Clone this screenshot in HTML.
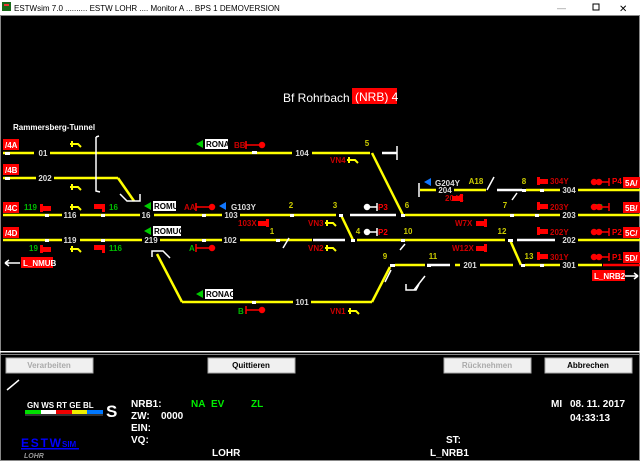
<!DOCTYPE html><html><head><meta charset="utf-8"><style>
body{margin:0;width:640px;height:461px;overflow:hidden;background:#000;font-family:"Liberation Sans",Arial,sans-serif}
svg{display:block}
text{font-family:"Liberation Sans",Arial,sans-serif;font-weight:bold}
</style></head><body>
<svg width="640" height="461" viewBox="0 0 640 461">
<rect x="0" y="0" width="640" height="15" fill="#fff"/>
<rect x="2" y="2" width="9" height="9" fill="#1a6a1a"/><rect x="4" y="4" width="5" height="2" fill="#e33"/>
<text x="14" y="11" font-size="8" style="font-weight:normal" fill="#000">ESTWsim 7.0 .......... ESTW LOHR .... Monitor A ... BPS 1  DEMOVERSION</text>
<text x="557" y="11" font-size="9" style="font-weight:normal" fill="#888">—</text>
<rect x="593" y="4" width="6" height="6" fill="none" stroke="#000"/>
<text x="619" y="12" font-size="10" style="font-weight:normal" fill="#000">✕</text>
<rect x="0.5" y="15.5" width="639" height="445" fill="none" stroke="#888"/>
<text x="283" y="102" font-size="12" style="font-weight:normal" fill="#fff">Bf Rohrbach</text>
<rect x="352" y="88" width="45" height="16" fill="#f00"/>
<text x="355" y="101" font-size="12" style="font-weight:normal" fill="#fff">(NRB) 4</text>
<text x="13" y="130" font-size="8" fill="#fff">Rammersberg-Tunnel</text>
<g stroke="#ff0" stroke-width="2.5" fill="none">
<line x1="3" y1="153" x2="370" y2="153"/>
<line x1="3" y1="178" x2="118" y2="178"/>
<line x1="118" y1="178" x2="134" y2="201"/>
<line x1="3" y1="215" x2="336" y2="215"/>
<line x1="405" y1="215" x2="640" y2="215"/>
<line x1="3" y1="240" x2="312" y2="240"/>
<line x1="357" y1="240" x2="505" y2="240"/>
<line x1="560" y1="240" x2="640" y2="240"/>
<line x1="372" y1="153" x2="403" y2="215"/>
<line x1="341" y1="215" x2="353" y2="240"/>
<line x1="510" y1="240" x2="521" y2="265"/>
<line x1="395" y1="265" x2="425" y2="265"/>
<line x1="455" y1="265" x2="513" y2="265"/>
<line x1="525" y1="265" x2="602" y2="265"/>
<line x1="157" y1="254" x2="182" y2="302"/>
<line x1="182" y1="302" x2="372" y2="302"/>
<line x1="372" y1="302" x2="390" y2="267"/>
<line x1="420" y1="190" x2="486" y2="190"/>
<line x1="526" y1="190" x2="640" y2="190"/>
</g>
<line x1="603" y1="265" x2="640" y2="265" stroke="#f00" stroke-width="2.5"/>
<g stroke="#fff" stroke-width="2.5" fill="none">
<line x1="382" y1="153" x2="397" y2="153"/><line x1="397" y1="146" x2="397" y2="160" stroke-width="1.5"/>
<line x1="350" y1="215" x2="396" y2="215"/>
<line x1="313" y1="240" x2="345" y2="240"/>
<line x1="517" y1="240" x2="555" y2="240"/>
<line x1="427" y1="265" x2="450" y2="265"/>
<line x1="497" y1="190" x2="522" y2="190"/>
<line x1="419" y1="183" x2="419" y2="197" stroke-width="1.5"/>
<path d="M96 137 L99 136 M96 137 L96 191 L100 192" stroke-width="1.5"/>
<path d="M120 194 L127 201 L140 201 L140 194" stroke-width="1.5"/>
<path d="M152 257 L152 251 L163 251 L170 258" stroke-width="1.5"/>
<path d="M406 284 L406 290 L416 290 L419 284" stroke-width="1.5"/>
<path d="M414 290 L425 276" stroke-width="1.5"/>
<line x1="7" y1="390" x2="19" y2="380" stroke-width="1.5"/>
<line x1="385" y1="282" x2="391" y2="270" stroke-width="1.5"/>
<line x1="283" y1="248" x2="289" y2="238" stroke-width="1.5"/>
<line x1="400" y1="250" x2="405" y2="244" stroke-width="1.5"/>
<line x1="512" y1="200" x2="517" y2="193" stroke-width="1.5"/>
<line x1="487" y1="190" x2="494" y2="177" stroke-width="1.5"/>
</g>
<g fill="#fff">
<rect x="5" y="152" width="5" height="3"/><rect x="5" y="177" width="5" height="3"/>
<rect x="252" y="151" width="5" height="3"/><rect x="45" y="214" width="4" height="3"/><rect x="101" y="214" width="4" height="3"/>
<rect x="202" y="214" width="4" height="3"/><rect x="290" y="214" width="4" height="3"/><rect x="339" y="214" width="4" height="3"/><rect x="401" y="214" width="4" height="3"/><rect x="510" y="214" width="4" height="3"/><rect x="535" y="214" width="4" height="3"/>
<rect x="45" y="239" width="4" height="3"/><rect x="101" y="239" width="4" height="3"/><rect x="202" y="239" width="4" height="3"/><rect x="276" y="239" width="4" height="3"/><rect x="351" y="239" width="4" height="3"/><rect x="401" y="239" width="4" height="3"/><rect x="508" y="239" width="5" height="3"/>
<rect x="390" y="264" width="5" height="3"/><rect x="427" y="264" width="4" height="3"/><rect x="521" y="264" width="4" height="3"/><rect x="540" y="264" width="4" height="3"/>
<rect x="252" y="301" width="4" height="3"/>
<rect x="522" y="189" width="4" height="3"/><rect x="540" y="189" width="4" height="3"/>
</g>
<g font-size="8" fill="#ddd" text-anchor="middle">
<rect x="34" y="148" width="16" height="9" fill="#000"/><text x="43" y="156">01</text>
<rect x="292" y="148" width="20" height="9" fill="#000"/><text x="302" y="156">104</text>
<rect x="36" y="173" width="18" height="9" fill="#000"/><text x="45" y="181">202</text>
<rect x="62" y="210" width="18" height="9" fill="#000"/><text x="70" y="218">116</text>
<rect x="140" y="210" width="14" height="9" fill="#000"/><text x="146" y="218">16</text>
<rect x="222" y="210" width="18" height="9" fill="#000"/><text x="231" y="218">103</text>
<rect x="62" y="235" width="18" height="9" fill="#000"/><text x="70" y="243">119</text>
<rect x="142" y="235" width="18" height="9" fill="#000"/><text x="151" y="243">219</text>
<rect x="222" y="235" width="18" height="9" fill="#000"/><text x="230" y="243">102</text>
<rect x="436" y="185" width="18" height="9" fill="#000"/><text x="445" y="193">204</text>
<rect x="560" y="185" width="18" height="9" fill="#000"/><text x="569" y="193">304</text>
<rect x="560" y="210" width="18" height="9" fill="#000"/><text x="569" y="218">203</text>
<rect x="560" y="235" width="18" height="9" fill="#000"/><text x="569" y="243">202</text>
<rect x="460" y="260" width="20" height="9" fill="#000"/><text x="470" y="268">201</text>
<rect x="560" y="260" width="18" height="9" fill="#000"/><text x="569" y="268">301</text>
<rect x="293" y="297" width="18" height="9" fill="#000"/><text x="302" y="305">101</text>
</g>
<g font-size="8" fill="#cc0" text-anchor="middle">
<text x="367" y="146">5</text><text x="291" y="208">2</text><text x="335" y="208">3</text><text x="272" y="234">1</text><text x="358" y="234">4</text><text x="407" y="208">6</text><text x="408" y="234">10</text><text x="385" y="259">9</text><text x="433" y="259">11</text><text x="502" y="234">12</text><text x="529" y="259">13</text><text x="505" y="208">7</text><text x="524" y="184">8</text><text x="476" y="184">A18</text>
</g>
<g font-size="8" style="font-weight:normal" fill="#fff">
<rect x="3" y="139" width="16" height="11" fill="#f00"/><text x="5" y="148">/4A</text>
<rect x="3" y="164" width="16" height="11" fill="#f00"/><text x="5" y="173">/4B</text>
<rect x="3" y="202" width="16" height="11" fill="#f00"/><text x="5" y="211">/4C</text>
<rect x="3" y="227" width="16" height="11" fill="#f00"/><text x="5" y="236">/4D</text>
<rect x="21" y="257" width="32" height="11" fill="#f00"/><text x="23" y="266">L_NMUB</text>
<rect x="623" y="177" width="17" height="11" fill="#f00"/><text x="625" y="186">5A/</text>
<rect x="623" y="202" width="17" height="11" fill="#f00"/><text x="625" y="211">5B/</text>
<rect x="623" y="227" width="17" height="11" fill="#f00"/><text x="625" y="236">5C/</text>
<rect x="623" y="252" width="17" height="11" fill="#f00"/><text x="625" y="261">5D/</text>
<rect x="592" y="270" width="33" height="11" fill="#f00"/><text x="594" y="279">L_NRB2</text>
</g>
<path d="M5 263 H20 M5 263 l4 -3 M5 263 l4 3" stroke="#fff" stroke-width="1.5"/>
<path d="M625 276 H638 M638 276 l-4 -3 M638 276 l-4 3" stroke="#fff" stroke-width="1.5"/>
<g fill="#0c0"><path d="M196 144 l7 -4 v8z"/><path d="M144 206 l7 -4 v8z"/><path d="M144 231 l7 -4 v8z"/><path d="M196 294 l7 -4 v8z"/></g>
<g fill="#17f"><path d="M219 206 l7 -4 v8z"/><path d="M424 182 l7 -4 v8z"/></g>
<g font-size="8" style="font-weight:normal" fill="#000">
<rect x="205" y="139" width="23" height="10" fill="#fff"/><text x="206" y="147">RONA</text>
<rect x="153" y="201" width="23" height="10" fill="#fff"/><text x="154" y="209">ROMU</text>
<rect x="153" y="226" width="28" height="10" fill="#fff"/><text x="154" y="234">ROMUG</text>
<rect x="205" y="289" width="28" height="10" fill="#fff"/><text x="206" y="297">RONAG</text>
</g>
<g font-size="8" fill="#ddd"><text x="231" y="210">G103Y</text><text x="435" y="186">G204Y</text></g>
<g font-size="8" fill="#0b0"><text x="24" y="210">119</text><text x="109" y="210">16</text><text x="29" y="251">19</text><text x="109" y="251">116</text><text x="189" y="251">A</text><text x="238" y="314">B</text><text x="593" y="210">P3</text></g>
<g font-size="8" fill="#c00"><text x="234" y="148">BB</text><text x="184" y="210">AA</text><text x="238" y="226">103X</text><text x="330" y="163">VN4</text><text x="308" y="226">VN3</text><text x="308" y="251">VN2</text><text x="330" y="314">VN1</text>
<text x="378" y="210" fill="#f00">P3</text><text x="378" y="235" fill="#f00">P2</text>
<text x="445" y="201">204X</text><text x="455" y="226">W7X</text><text x="452" y="251">W12X</text>
<text x="550" y="184">304Y</text><text x="550" y="210">203Y</text><text x="550" y="235">202Y</text><text x="550" y="260">301Y</text>
<text x="612" y="184" fill="#f00">P4</text><text x="612" y="235" fill="#f00">P2</text><text x="612" y="260" fill="#f00">P1</text></g>
<g fill="#f00" stroke="#f00" stroke-width="1.5">
<line x1="246" y1="145" x2="262" y2="145"/><line x1="246" y1="141" x2="246" y2="149"/><circle cx="262" cy="145" r="2.5"/>
<line x1="196" y1="207" x2="212" y2="207"/><line x1="196" y1="203" x2="196" y2="211"/><circle cx="212" cy="207" r="2.5"/>
<line x1="196" y1="248" x2="212" y2="248"/><line x1="196" y1="244" x2="196" y2="252"/><circle cx="212" cy="248" r="2.5"/>
<line x1="246" y1="310" x2="262" y2="310"/><line x1="246" y1="306" x2="246" y2="314"/><circle cx="262" cy="310" r="2.5"/>
<line x1="598" y1="182" x2="609" y2="182"/><line x1="609" y1="178" x2="609" y2="186"/><circle cx="594" cy="182" r="2.5"/><circle cx="599" cy="182" r="2.5"/>
<line x1="598" y1="232" x2="609" y2="232"/><line x1="609" y1="228" x2="609" y2="236"/><circle cx="594" cy="232" r="2.5"/><circle cx="599" cy="232" r="2.5"/>
<line x1="598" y1="257" x2="609" y2="257"/><line x1="609" y1="253" x2="609" y2="261"/><circle cx="594" cy="257" r="2.5"/><circle cx="599" cy="257" r="2.5"/>
<line x1="598" y1="207" x2="609" y2="207"/><line x1="609" y1="203" x2="609" y2="211"/><circle cx="594" cy="207" r="2.5"/><circle cx="599" cy="207" r="2.5"/>
</g>
<g fill="#f00">
<rect x="40" y="206" width="11" height="5"/><rect x="40" y="204" width="3" height="8"/>
<rect x="94" y="204" width="11" height="5"/><rect x="102" y="204" width="3" height="8"/>
<rect x="40" y="247" width="11" height="5"/><rect x="40" y="245" width="3" height="8"/>
<rect x="94" y="245" width="11" height="5"/><rect x="102" y="245" width="3" height="8"/>
<rect x="258" y="221" width="11" height="5"/><rect x="266" y="219" width="3" height="8"/>
<rect x="452" y="196" width="11" height="5"/><rect x="460" y="194" width="3" height="8"/>
<rect x="476" y="221" width="11" height="5"/><rect x="484" y="219" width="3" height="8"/>
<rect x="476" y="246" width="11" height="5"/><rect x="484" y="244" width="3" height="8"/>
<rect x="537" y="179" width="11" height="5"/><rect x="537" y="177" width="3" height="8"/>
<rect x="537" y="204" width="11" height="5"/><rect x="537" y="202" width="3" height="8"/>
<rect x="537" y="229" width="11" height="5"/><rect x="537" y="227" width="3" height="8"/>
<rect x="537" y="254" width="11" height="5"/><rect x="537" y="252" width="3" height="8"/>
</g>
<g stroke="#fff" fill="#fff" stroke-width="1.5">
<line x1="366" y1="207" x2="377" y2="207"/><line x1="377" y1="203" x2="377" y2="211"/><circle cx="367" cy="207" r="2.5"/>
<line x1="366" y1="232" x2="377" y2="232"/><line x1="377" y1="228" x2="377" y2="236"/><circle cx="367" cy="232" r="2.5"/>
</g>
<g stroke="#ff0" stroke-width="2" fill="none">
<path d="M70 144 h8 l3 3 M72 141 v6"/><path d="M70 187 h8 l3 3 M72 184 v6"/><path d="M70 207 h8 l3 3 M72 204 v6"/><path d="M70 249 h8 l3 3 M72 246 v6"/>
<path d="M347 160 h8 l3 3 M349 157 v6"/><path d="M325 223 h8 l3 3 M327 220 v6"/><path d="M325 248 h8 l3 3 M327 245 v6"/><path d="M348 311 h8 l3 3 M350 308 v6"/>
</g>
<rect x="0" y="351" width="640" height="1.5" fill="#fff"/><rect x="0" y="354" width="640" height="1" fill="#888"/>
<g font-size="8" text-anchor="middle">
<rect x="6" y="358" width="87" height="15" fill="#f0f0f0" stroke="#aaa"/><text x="49" y="368" fill="#aaa">Verarbeiten</text>
<rect x="208" y="358" width="87" height="15" fill="#f0f0f0" stroke="#aaa"/><text x="251" y="368" fill="#000">Quittieren</text>
<rect x="444" y="358" width="87" height="15" fill="#f0f0f0" stroke="#aaa"/><text x="487" y="368" fill="#aaa">Rücknehmen</text>
<rect x="545" y="358" width="87" height="15" fill="#f0f0f0" stroke="#aaa"/><text x="588" y="368" fill="#000">Abbrechen</text>
</g>
<g font-size="8" fill="#fff"><text x="27" y="408">GN WS RT GE BL</text></g>
<rect x="25" y="410" width="16" height="4" fill="#0d0"/><rect x="41" y="410" width="15" height="4" fill="#fff"/><rect x="56" y="410" width="16" height="4" fill="#e00"/><rect x="72" y="410" width="15" height="4" fill="#ee0"/><rect x="87" y="410" width="16" height="4" fill="#07f"/>
<rect x="25" y="414" width="78" height="2" fill="#333"/>
<text x="106" y="417" font-size="17" fill="#fff">S</text>
<g font-size="10" fill="#fff"><text x="131" y="407">NRB1:</text><text x="131" y="419">ZW:</text><text x="161" y="419">0000</text><text x="131" y="431">EIN:</text><text x="131" y="443">VQ:</text><text x="212" y="456">LOHR</text>
<text x="551" y="407">MI</text><text x="570" y="407">08. 11. 2017</text><text x="570" y="421">04:33:13</text><text x="446" y="443">ST:</text><text x="430" y="456">L_NRB1</text></g>
<g font-size="10" fill="#0e0"><text x="191" y="407">NA</text><text x="211" y="407">EV</text><text x="251" y="407">ZL</text></g>
<text x="21" y="447" font-size="12" fill="#00f" textLength="40">ESTW</text><text x="62" y="447" font-size="8" fill="#00f">SIM</text>
<rect x="21" y="448" width="58" height="1.5" fill="#00f"/>
<text x="24" y="458" font-size="7" font-style="italic" fill="#999">LOHR</text>
</svg>
</body></html>
